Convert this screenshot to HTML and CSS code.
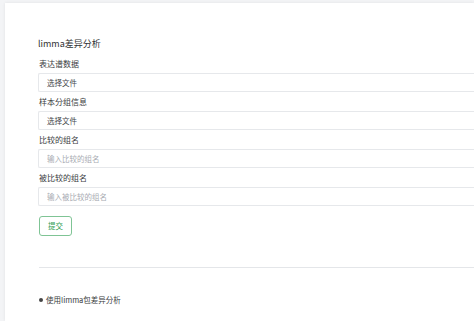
FILE: index.html
```html
<!DOCTYPE html>
<html lang="zh-CN">
<head>
<meta charset="utf-8">
<title>limma差异分析</title>
<link rel="stylesheet" href="styles.css">
</head>
<body>
<div class="card">
  <div class="title">limma差异分析</div>
  <form class="form">
    <div class="label">表达谱数据</div>
    <div class="field file"><span>选择文件</span></div>
    <div class="label">样本分组信息</div>
    <div class="field file"><span>选择文件</span></div>
    <div class="label">比较的组名</div>
    <div class="field"><input type="text" placeholder="输入比较的组名"></div>
    <div class="label">被比较的组名</div>
    <div class="field"><input type="text" placeholder="输入被比较的组名"></div>
    <div class="actions"><button type="button" class="submit">提交</button></div>
  </form>
  <div class="divider"></div>
  <ul class="notes">
    <li><span class="dot"></span>使用limma包差异分析</li>
  </ul>
</div>
</body>
</html>
```
FILE: styles.css
```css
html, body {
  margin: 0;
  padding: 0;
  background: #f3f4f6;
  overflow: hidden;
  font-family: "Noto Sans CJK SC", "Noto Sans", sans-serif;
}
body {
  height: 321px;
}
.card {
  margin: 3px 0 0 5px;
  height: 318px;
  background: #fff;
  box-shadow: 0 0 3px rgba(0,0,0,0.08);
  padding: 34px 0 0 33px;
  box-sizing: border-box;
}
.title {
  font-size: 9px;
  line-height: 14px;
  color: #303133;
}
.form {
  margin: 3px 0 0 0;
  display: flex;
  flex-direction: column;
}
.label {
  font-size: 8px;
  line-height: 19px;
  height: 19px;
  color: #3a3c40;
  padding-left: 1px;
}
.field {
  height: 19px;
  box-sizing: border-box;
  border: 1px solid #e6e8eb;
  border-right: none;
  border-radius: 2px 0 0 2px;
  display: flex;
  align-items: center;
  padding-left: 8px;
  font-size: 7.5px;
  color: #45474b;
}
.field input {
  border: none;
  outline: none;
  padding: 0;
  margin: 0;
  font-family: inherit;
  font-size: 7.5px;
  color: #45474b;
  width: 100%;
  background: transparent;
}
.field input::placeholder {
  color: #a8abb2;
}
.actions {
  margin-top: 4px;
}
.submit {
  margin-left: 1px;
  width: 33px;
  height: 20px;
  padding: 0;
  border: 1px solid #7fc495;
  border-radius: 3px;
  background: #fff;
  color: #2f9e52;
  font-family: inherit;
  font-size: 7.5px;
}
.divider {
  margin: 31px 0 0 1px;
  height: 1px;
  background: #e4e6e9;
}
.notes {
  list-style: none;
  margin: 26px 0 0 0;
  padding: 0 0 0 1px;
  font-size: 7.5px;
  line-height: 12px;
  color: #3a3c40;
}
.notes li {
  display: flex;
  align-items: center;
}
.dot {
  width: 4px;
  height: 4px;
  border-radius: 50%;
  background: #444;
  margin-right: 3px;
}
```
